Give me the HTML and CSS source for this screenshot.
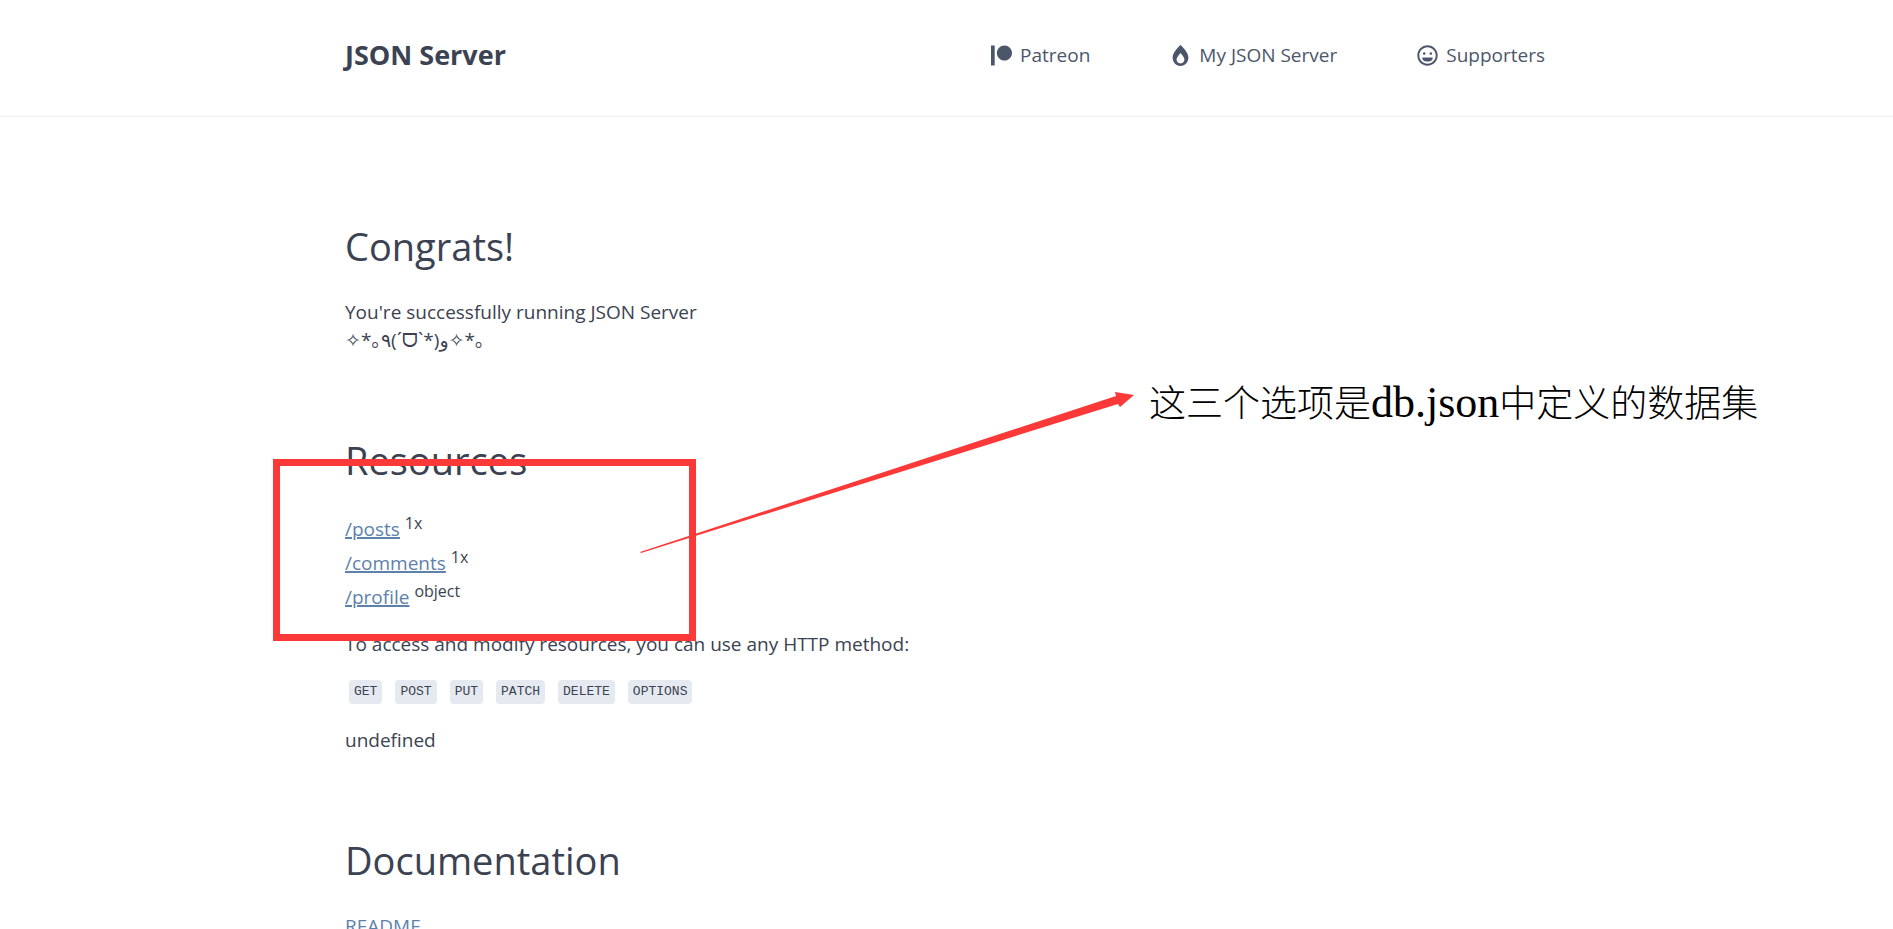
FILE: index.html
```html
<!DOCTYPE html>
<html lang="en">
<head>
  <meta charset="UTF-8" />
  <meta name="viewport" content="width=device-width, initial-scale=1.0" />
  <title>JSON Server</title>
  <link rel="stylesheet" href="styles.css">
</head>
<body>
  <header>
    <div class="container">
      <nav>
        <div class="title">JSON Server</div>
        <ul>
          <li><a href="#patreon">
            <svg class="icon" viewBox="0 0 512 512"><path d="M512 194.800c0 101.300-82.400 183.800-183.800 183.800-101.700 0-184.400-82.400-184.400-183.800 0-101.600 82.700-184.300 184.400-184.300C429.600 10.500 512 93.200 512 194.800zM0 501.500h90v-491H0v491z"/></svg>
            Patreon
          </a></li>
          <li><a href="#my-json-server">
            <svg class="icon" viewBox="0 0 384 512"><path d="M192 0C79.700 101.300 0 220.900 0 300.500 0 425 79 512 192 512s192-87 192-211.500c0-79.900-80.200-199.600-192-300.500zm0 448c-56.500 0-96-39-96-94.800 0-13.500 4.600-61.500 96-161.200 91.500 99.700 96 147.700 96 161.200 0 55.800-39.500 94.800-96 94.800z"/></svg>
            My JSON Server
          </a></li>
          <li><a href="#supporters">
            <svg class="icon" viewBox="0 0 496 512"><path d="M248 8C111 8 0 119 0 256s111 248 248 248 248-111 248-248S385 8 248 8zm0 448c-110.300 0-200-89.700-200-200S137.700 56 248 56s200 89.700 200 200-89.700 200-200 200zm-80-216c17.700 0 32-14.300 32-32s-14.300-32-32-32-32 14.300-32 32 14.300 32 32 32zm160 0c17.700 0 32-14.300 32-32s-14.300-32-32-32-32 14.300-32 32 14.300 32 32 32zm34 64H134c-8.800 0-16 7.200-14.900 16C126.600 366 161 400 216 400h64c55 0 89.400-34 96.900-80 1.100-8.800-6.100-16-14.900-16z"/></svg>
            Supporters
          </a></li>
        </ul>
      </nav>
    </div>
  </header>

  <main class="container">
    <section>
      <h1>Congrats!</h1>
      <p>You're successfully running JSON Server<br>
        <bdo dir="ltr">✧*｡٩(ˊᗜˋ*)و✧*｡</bdo></p>
    </section>

    <section>
      <h1>Resources</h1>
      <ul class="resources">
        <li><a href="#posts">/posts</a> <sup>1x</sup></li>
        <li><a href="#comments">/comments</a> <sup>1x</sup></li>
        <li><a href="#profile">/profile</a> <sup>object</sup></li>
      </ul>
      <p>To access and modify resources, you can use any HTTP method:</p>
      <p class="methods">
        <code>GET</code>
        <code>POST</code>
        <code>PUT</code>
        <code>PATCH</code>
        <code>DELETE</code>
        <code>OPTIONS</code>
      </p>
      <p>undefined</p>
    </section>

    <section>
      <h1>Documentation</h1>
      <p><a class="readme" href="#readme">README</a></p>
    </section>

    <!-- Notes over the page -->
    <div class="note-box"></div>
    <svg class="note-arrow" viewBox="0 0 500 170"><path d="M0 162L476 6 475 2 494 5 480 17 478 14 1 163z"/></svg>
    <div class="note-text" lang="zh-CN">这三个选项是<span>db.json</span>中定义的数据集</div>
  </main>
</body>
</html>
```
FILE: styles.css
```css
* { box-sizing: border-box; }
html, body { height: 100%; }
body {
  margin: 0;
  overflow: hidden;
  background: #fff;
  color: #3b4252;
  font-family: "Open Sans", "Noto Sans", "DejaVu Sans", "Noto Sans CJK SC", sans-serif;
  font-size: 19px;
  line-height: 28px;
}
.container {
  max-width: 1203px;
  margin: 0 auto;
  padding-right: 3px;
}
header {
  border-bottom: 1px solid #eceff4;
}
nav {
  display: flex;
  justify-content: space-between;
  align-items: center;
  height: 116px;
  padding-bottom: 6px;
}
.title {
  font-size: 27px;
  font-weight: bold;
}
ul {
  list-style: none;
  margin: 0;
  padding: 0;
}
nav ul {
  display: flex;
  gap: 78px;
}
nav a {
  display: flex;
  align-items: center;
  gap: 6px;
  color: #4c566a;
  text-decoration: none;
}
.icon {
  width: 25px;
  height: 21px;
  fill: #4c566a;
}
main {
  position: relative;
  padding-top: 99px;
}
section { margin-bottom: 76px; }
h1 {
  margin: 0 0 22px;
  font-size: 38px;
  font-weight: normal;
  line-height: 60px;
}
p { margin: 0 0 22px; }
.resources { margin-bottom: 16px; }
.resources li { line-height: 34px; }
.resources a {
  color: #5e81ac;
  text-decoration-thickness: 2px;
}
sup {
  font-size: 16px;
  line-height: 0;
}
.methods {
  display: flex;
  gap: 13px;
  padding-left: 4px;
}
code {
  padding: 0 5px;
  border-radius: 4px;
  background: #e5e9f0;
  font-family: "Liberation Mono", monospace;
  font-size: 13px;
  line-height: 24px;
}
.readme {
  color: #5e81ac;
  text-decoration: none;
}

/* Notes */
.note-box {
  position: absolute;
  top: 342px;
  left: -72px;
  width: 423px;
  height: 182px;
  border: 7px solid #fc3939;
}
.note-arrow {
  position: absolute;
  top: 273px;
  left: 295px;
  width: 500px;
  height: 170px;
  fill: #fc3939;
}
.note-text {
  position: absolute;
  top: 258px;
  left: 804px;
  color: #000;
  font-family: "Noto Sans CJK SC", sans-serif;
  font-size: 37px;
  font-weight: 300;
  line-height: 52px;
  white-space: nowrap;
}
.note-text span {
  font-family: "Liberation Serif", serif;
  font-size: 44px;
}
```
